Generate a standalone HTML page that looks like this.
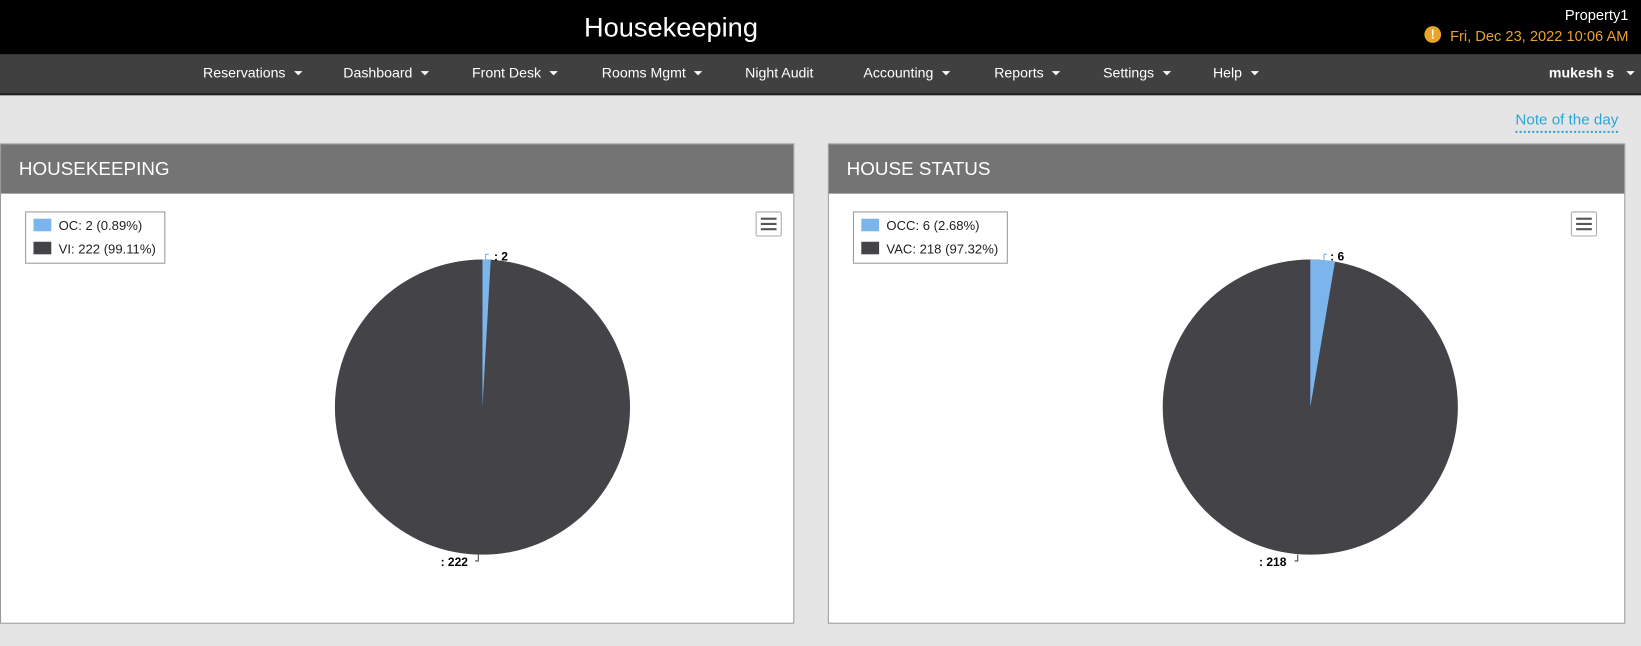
<!DOCTYPE html>
<html><head><style>
body{margin:0;width:1641px;height:645px;background:#e5e5e5;font-family:"Liberation Sans",sans-serif;overflow:hidden}
#w{position:absolute;left:0;top:0;width:1568px;height:617px;transform:scale(1.04656);transform-origin:0 0}
.top{position:absolute;left:0;top:0;width:1568px;height:52px;background:#000}
.title{position:absolute;left:558px;top:11px;color:#fff;font-size:26px}
.prop{position:absolute;right:12px;top:6px;color:#fff;font-size:14px}
.date{position:absolute;right:12px;top:26px;color:#e8a32a;font-size:14px}
.warn{position:absolute;left:1361px;top:25px;width:16px;height:16px;border-radius:50%;background:#e8a32a;color:#fff;font-size:12px;font-weight:bold;text-align:center;line-height:16px}
.nav{position:absolute;left:0;top:52px;width:1568px;height:37px;background:#404040;border-bottom:2px solid #222}
.nav span{position:absolute;top:10px;color:#fff;font-size:13.5px}
.car{display:inline-block;border-left:4px solid transparent;border-right:4px solid transparent;border-top:4px solid #fff;margin-left:8px;vertical-align:middle}
.note{position:absolute;left:1448px;top:107px;color:#2aa6d6;font-size:14.5px;border-bottom:2px dotted #2aa6d6;padding-bottom:2px}
.panel{position:absolute;top:137px;height:457px;background:#fff;border:1px solid #999}
.ph{height:47px;background:#747474;color:#fff;font-size:18px;line-height:47px;padding-left:17px}
.leg{position:absolute;top:64px;left:23px;border:1px solid #999;font-size:12.5px;color:#222;padding:4px 8px 0 7px}
.leg div{height:22px;line-height:18px}
.sw{display:inline-block;width:17px;height:12px;vertical-align:-1px;margin-right:7px}
.ham{position:absolute;top:64px;width:23px;height:22px;border:1px solid #aaa;border-radius:2px}
.ham i{position:absolute;left:4px;width:15px;height:2px;background:#555}
</style></head><body><div id="w">
<div class="top"><div class="title">Housekeeping</div><div class="prop">Property1</div><div class="warn">!</div><div class="date">Fri, Dec 23, 2022 10:06 AM</div></div>
<div class="nav">
<span style="left:194px">Reservations<i class="car"></i></span>
<span style="left:328px">Dashboard<i class="car"></i></span>
<span style="left:451px">Front Desk<i class="car"></i></span>
<span style="left:575px">Rooms Mgmt<i class="car"></i></span>
<span style="left:712px">Night Audit</span>
<span style="left:825px">Accounting<i class="car"></i></span>
<span style="left:950px">Reports<i class="car"></i></span>
<span style="left:1054px">Settings<i class="car"></i></span>
<span style="left:1159px">Help<i class="car"></i></span>
<span style="left:1480px;font-weight:bold">mukesh s<i class="car" style="margin-left:12px"></i></span>
</div>
<div class="note">Note of the day</div>
<div class="panel" style="left:0;width:757px"><div class="ph">HOUSEKEEPING</div>
<div class="leg"><div><i class="sw" style="background:#7cb5ec"></i>OC: 2 (0.89%)</div><div><i class="sw" style="background:#434348"></i>VI: 222 (99.11%)</div></div>
<div class="ham" style="left:721px"><i style="top:5px"></i><i style="top:10px"></i><i style="top:15px"></i></div></div>
<div class="panel" style="left:791px;width:760px"><div class="ph">HOUSE STATUS</div>
<div class="leg"><div><i class="sw" style="background:#7cb5ec"></i>OCC: 6 (2.68%)</div><div><i class="sw" style="background:#434348"></i>VAC: 218 (97.32%)</div></div>
<div class="ham" style="left:709px"><i style="top:5px"></i><i style="top:10px"></i><i style="top:15px"></i></div></div>
<svg style="position:absolute;left:0;top:0" width="1568" height="617" font-family="Liberation Sans" font-size="11.5" font-weight="bold" fill="#000">
<circle cx="461" cy="389" r="141" fill="#434348"/>
<path d="M461 389 L461 248 A141 141 0 0 1 468.9 248.2 Z" fill="#7cb5ec"/>
<path d="M464 250 v-7 h3" stroke="#7cb5ec" fill="none"/><text x="472" y="249">: 2</text>
<path d="M457 530 v6 h-3" stroke="#434348" fill="none"/><text x="421" y="541">: 222</text>
<circle cx="1252" cy="389" r="141" fill="#434348"/>
<path d="M1252 389 L1252 248 A141 141 0 0 1 1275.6 250 Z" fill="#7cb5ec"/>
<path d="M1265 250 v-7 h3" stroke="#7cb5ec" fill="none"/><text x="1271" y="249">: 6</text>
<path d="M1240 530 v6 h-3" stroke="#434348" fill="none"/><text x="1203" y="541">: 218</text>
</svg>
</div></body></html>
